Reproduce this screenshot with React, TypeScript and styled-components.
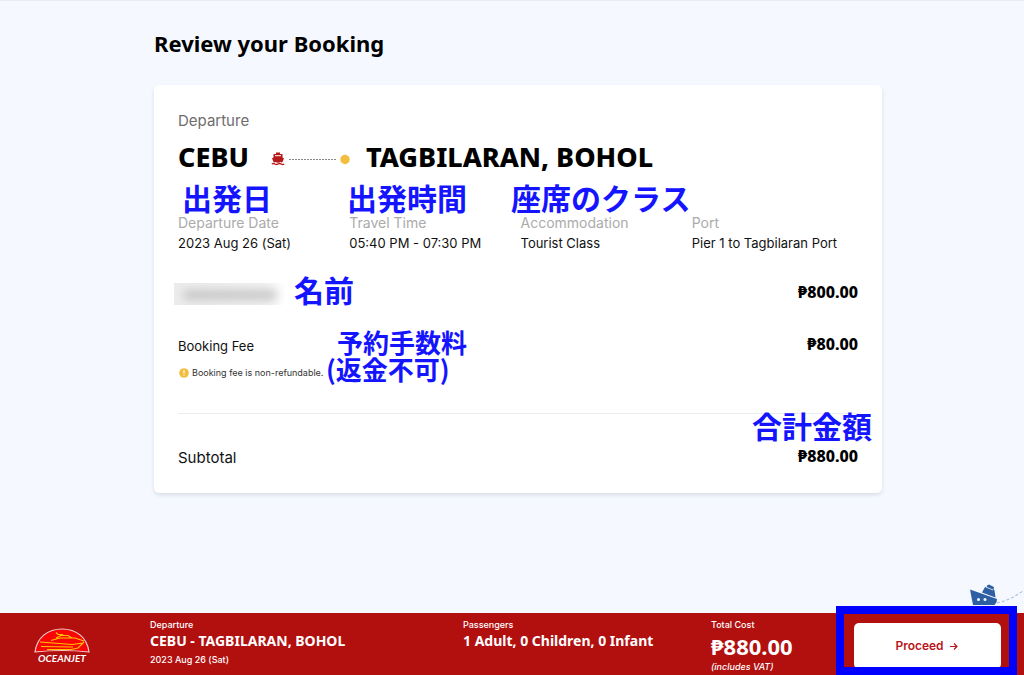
import React from 'react';
import styled, { createGlobalStyle } from 'styled-components';

const GlobalStyle = createGlobalStyle`
  *, *::before, *::after { box-sizing: border-box; }
  body {
    margin: 0;
    background: #f5f9ff;
    color: #000;
    font-family: Inter, "Noto Sans CJK JP", sans-serif;
    font-size: 13px;
    line-height: 20px;
  }
  h1, h2, p, dl, dt, dd { margin: 0; }
`;

const display = '"Noto Sans", "Noto Sans CJK JP", sans-serif';

const Page = styled.div`
  min-height: 100vh;
  display: flex;
  flex-direction: column;
  border-top: 1px solid #e9edf3;
`;

const Main = styled.main`
  flex: 1;
  padding: 26px 142px 40px 154px;
`;

const Title = styled.h1`
  font: 700 22px/32px ${display};
`;

const Card = styled.section`
  position: relative;
  margin-top: 26px;
  padding: 24px;
  background: #fff;
  border-radius: 5px;
  box-shadow: 0 2px 4px rgba(40, 60, 90, 0.14);
`;

const Eyebrow = styled.p`
  font-size: 15px;
  line-height: 24px;
  color: #6d6d6d;
`;

const Route = styled.h2`
  display: flex;
  align-items: center;
  margin-top: 5px;
  font: 800 27px/38px ${display};
`;

const RouteLine = styled.svg`
  margin: 4px 15px 0 22px;
  flex: none;
`;

const Details = styled.dl`
  display: grid;
  grid-template-columns: repeat(4, 1fr);
  margin-top: 37px;
  margin-right: -5px;
`;

const DetailLabel = styled.dt`
  font-size: 14px;
  line-height: 20px;
  color: #ababab;
`;

const DetailValue = styled.dd`
  font-size: 13px;
  line-height: 20px;
  color: #111;
`;

const Row = styled.div<{ $gap: number }>`
  display: flex;
  justify-content: space-between;
  align-items: center;
  height: 22px;
  margin-top: ${(p) => p.$gap}px;
`;

const RowLabel = styled.span<{ $large?: boolean }>`
  font-size: ${(p) => (p.$large ? 15 : 13)}px;
  color: #111;
`;

const Amount = styled.span`
  padding-bottom: 4px;
  font: 800 16px/22px ${display};
`;

const HiddenName = styled.span`
  width: 112px;
  height: 22px;
  margin-left: -4px;
  overflow: hidden;
  background: linear-gradient(90deg, #ececec, #f2f2f2 80%, #fff);

  &::before {
    content: "";
    display: block;
    height: 10px;
    margin: 7px 10px;
    background: #c6c6c6;
    filter: blur(5px);
  }
`;

const Note = styled.p`
  display: flex;
  align-items: center;
  gap: 3px;
  margin-top: 6px;
  padding-left: 1px;
  font-size: 9px;
  color: #333;
`;

const Divider = styled.hr`
  margin: 30px 0 0;
  border: 0;
  border-top: 1px solid #e9edf1;
`;

const Annotation = styled.span<{ $x: number; $y: number; $size?: number }>`
  position: absolute;
  left: ${(p) => p.$x}px;
  top: ${(p) => p.$y}px;
  font: 700 ${(p) => p.$size ?? 30}px/${(p) => (p.$size ? 27 : 36)}px "Noto Sans CJK JP", sans-serif;
  color: #1414ff;
  white-space: nowrap;
`;

const EndAnnotation = styled(Annotation)`
  left: auto;
  right: ${(p) => p.$x}px;
`;

const Footer = styled.footer`
  position: relative;
  display: grid;
  grid-template-columns: 116px 313fr 248fr 143fr 147px;
  height: 62px;
  padding: 0 23px 0 34px;
  background: #b20f0f;
  color: #fff;
`;

const Logo = styled.svg`
  margin-top: 14px;
`;

const Summary = styled.div`
  padding-top: 5px;
`;

const Small = styled.p<{ $italic?: boolean }>`
  font-size: 9px;
  line-height: 14px;
  font-weight: 500;
  font-style: ${(p) => (p.$italic ? 'italic' : 'normal')};
`;

const Strong = styled.p`
  padding-bottom: 3px;
  font: 700 14px/18px ${display};
  white-space: nowrap;
`;

const Total = styled.p`
  font: 700 22px/28px ${display};
`;

const Proceed = styled.button`
  display: flex;
  align-items: center;
  justify-content: center;
  gap: 5px;
  height: 46px;
  margin-top: 10px;
  padding: 0 8px 0 6px;
  border: 0;
  border-radius: 5px;
  background: #fff;
  color: #b8161b;
  font: 600 12px/20px Inter, sans-serif;
`;

const Highlight = styled.span`
  position: absolute;
  right: 7px;
  top: -7px;
  bottom: 0;
  width: 181px;
  border: 8px solid #0000fe;
  pointer-events: none;
`;

const Ship = styled.svg`
  position: absolute;
  right: 0;
  top: -31px;
`;

const details = [
  ['Departure Date', '2023 Aug 26 (Sat)'],
  ['Travel Time', '05:40 PM - 07:30 PM'],
  ['Accommodation', 'Tourist Class'],
  ['Port', 'Pier 1 to Tagbilaran Port'],
];

export default function App() {
  return (
    <Page>
      <GlobalStyle />
      <Main>
        <Title>Review your Booking</Title>
        <Card>
          <Eyebrow>Departure</Eyebrow>
          <Route>
            CEBU
            <RouteLine width="80" height="14" viewBox="0 0 80 14" aria-hidden="true">
              <path
                d="M5 .5h4V2h2.500v3.500L13 6.300 11.500 10q-.9.8-1.800 0-2.700 1.400-5.400 0-.9.8-1.800 0L1 6.300l1.500-.8V2H5z"
                fill="#b51a1a"
              />
              <path d="M4 3.700h6" stroke="#fff" strokeWidth="1" />
              <path d="M.8 12q1.500-1 3.100 0t3.100 0 3.100 0 3.100 0" stroke="#b51a1a" strokeWidth="1.300" fill="none" />
              <path d="M18 7.500h48" stroke="#888" strokeWidth="1" strokeDasharray="2 1" />
              <circle cx="74" cy="7.500" r="4.700" fill="#f3bd40" />
            </RouteLine>
            TAGBILARAN, BOHOL
          </Route>
          <Details>
            {details.map(([label, value]) => (
              <div key={label}>
                <DetailLabel>{label}</DetailLabel>
                <DetailValue>{value}</DetailValue>
              </div>
            ))}
          </Details>
          <Row $gap={30}>
            <HiddenName />
            <Amount>₱800.00</Amount>
          </Row>
          <Row $gap={30}>
            <RowLabel>Booking Fee</RowLabel>
            <Amount>₱80.00</Amount>
          </Row>
          <Note>
            <svg width="10" height="10" viewBox="0 0 10 10" aria-hidden="true">
              <circle cx="5" cy="5" r="4.800" fill="#f3bd40" />
              <path d="M5 2.200v3.300M5 6.700v1.100" stroke="#fff" strokeWidth="1.200" />
            </svg>
            Booking fee is non-refundable.
          </Note>
          <Divider />
          <Row $gap={33}>
            <RowLabel $large>Subtotal</RowLabel>
            <Amount>₱880.00</Amount>
          </Row>
          <Annotation $x={28} $y={94}>出発日</Annotation>
          <Annotation $x={193} $y={94}>出発時間</Annotation>
          <Annotation $x={357} $y={94}>座席のクラス</Annotation>
          <Annotation $x={140} $y={186}>名前</Annotation>
          <Annotation $x={183} $y={243} $size={26}>予約手数料</Annotation>
          <Annotation $x={172} $y={270} $size={26}>(返金不可)</Annotation>
          <EndAnnotation $x={10} $y={322}>合計金額</EndAnnotation>
        </Card>
      </Main>
      <Footer>
        <Logo width="57" height="37" viewBox="0 0 57 37" role="img" aria-label="OceanJet">
          <path d="M1 25C3 10 14 2 28 2s25 8 27 23q-27-3-54 0z" fill="#f80505" stroke="#eed0d0" strokeWidth="1.200" />
          <path
            d="M6 15l32 2.500 11-1.500M7 19.500l32 .5M50 15l-6 6-7 1.500H13M17 13.500l9-2.500h15l9 3M22 11l5-2.500h7l4 2.500M22 5.500l2 2h4l-2 1.500"
            fill="none"
            stroke="#ffc400"
            strokeWidth="1.200"
          />
          <text x="28" y="35" textAnchor="middle" fill="#fff" fontFamily="Lato" fontSize="10" fontWeight="700" fontStyle="italic">
            OCEANJET
          </text>
        </Logo>
        <Summary>
          <Small>Departure</Small>
          <Strong>CEBU - TAGBILARAN, BOHOL</Strong>
          <Small>2023 Aug 26 (Sat)</Small>
        </Summary>
        <Summary>
          <Small>Passengers</Small>
          <Strong>1 Adult, 0 Children, 0 Infant</Strong>
        </Summary>
        <Summary>
          <Small>Total Cost</Small>
          <Total>₱880.00</Total>
          <Small $italic>(includes VAT)</Small>
        </Summary>
        <Proceed type="button">
          Proceed
          <svg width="9" height="9" viewBox="0 0 9 9" fill="none" stroke="currentColor" strokeWidth="1.200" aria-hidden="true">
            <path d="M1 4.500h7M5 1.500l3 3-3 3" />
          </svg>
        </Proceed>
        <Ship width="56" height="25" viewBox="0 0 56 25" aria-hidden="true">
          <path d="M2 7.500l27 9.500q.5 3-2.500 6H5z" fill="#2f5fa3" />
          <path d="M14 10.500l3-5.500 1.500.5.500-2 2-1 5 2.500-.5 2.500 1 .7 1 7.300z" fill="#2f5fa3" />
          <path d="M18 5l7 3" stroke="#f5f9ff" strokeWidth=".8" />
          <circle cx="10.500" cy="17.500" r="1.500" fill="#f5f9ff" />
          <circle cx="17" cy="17.500" r="1.500" fill="#f5f9ff" />
          <path d="M29 21q14-3 27-13" fill="none" stroke="#a9bdd9" strokeWidth="1.100" strokeDasharray="3 2" />
        </Ship>
        <Highlight />
      </Footer>
    </Page>
  );
}
